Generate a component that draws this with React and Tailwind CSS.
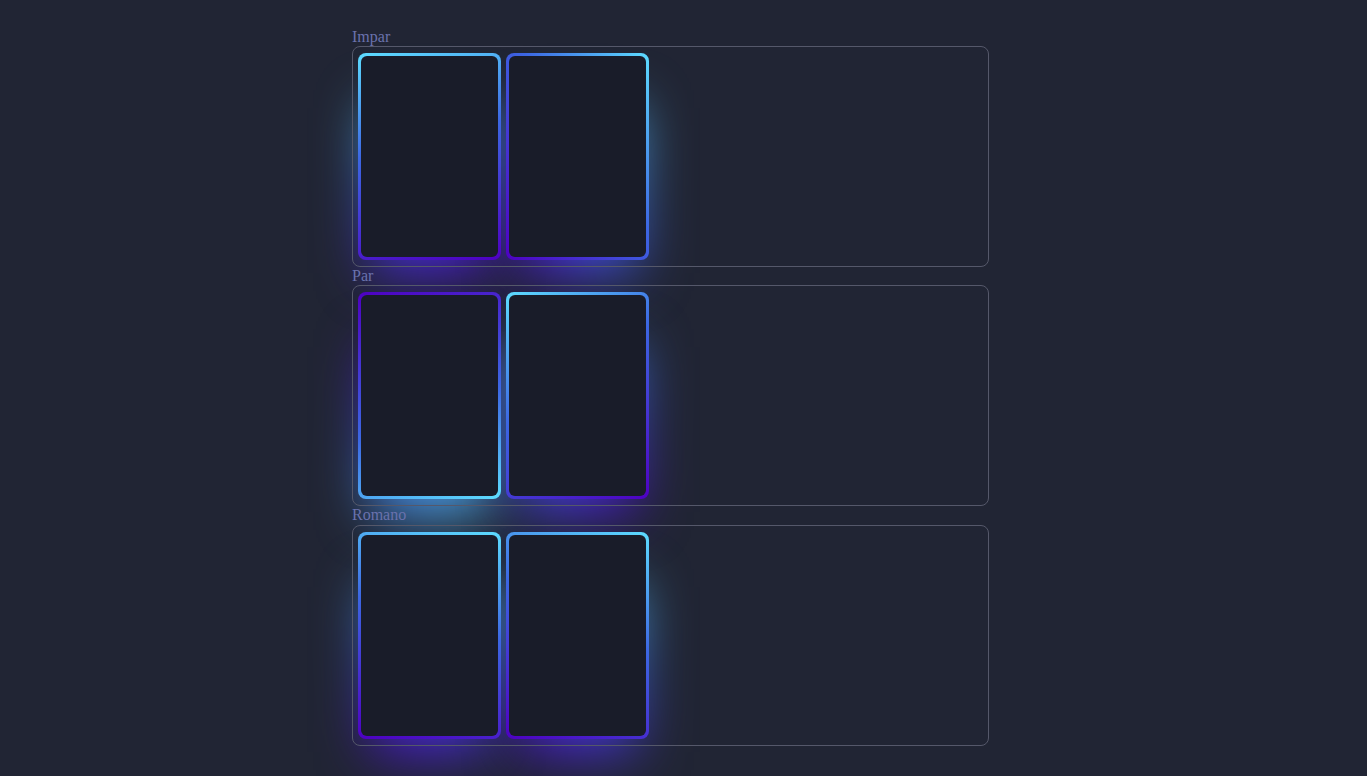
import React from "react";

function Card({ grad }) {
  return (
    <div className="relative w-[143px] h-[207px] shrink-0">
      <div className={`absolute left-0 right-0 top-[34px] h-full -z-10 scale-[0.8] blur-[34px] ${grad}`} />
      <div className={`relative w-full h-full rounded-[8px] p-[3px] ${grad}`}>
        <div className="w-full h-full rounded-[6px] bg-[#191c29]" />
      </div>
    </div>
  );
}

function Section({ label, grads }) {
  return (
    <div className="flex flex-col">
      <div className="text-[16px] leading-[18.4px] text-[#6a72ad]" style={{ fontFamily: '"Liberation Serif", serif' }}>
        {label}
      </div>
      <div className="w-[637px] h-[221px] rounded-[8px] border border-[#55586a] px-[5px] pt-[6px] flex gap-[5px]">
        {grads.map((g, i) => (
          <Card key={i} grad={g} />
        ))}
      </div>
    </div>
  );
}

export default function App() {
  return (
    <div className="isolate relative min-h-screen bg-[#212534] pl-[352px] pt-[27.6px] overflow-hidden">
      <Section
        label="Impar"
        grads={[
          "bg-[linear-gradient(165deg,#5ddcff,#3c67e3_43%,#4e00c2)]",
          "bg-[linear-gradient(235deg,#5ddcff,#3c67e3_43%,#4e00c2)]",
        ]}
      />
      <Section
        label="Par"
        grads={[
          "bg-[linear-gradient(340deg,#5ddcff,#3c67e3_43%,#4e00c2)]",
          "bg-[linear-gradient(145deg,#5ddcff,#3c67e3_43%,#4e00c2)]",
        ]}
      />
      <Section
        label="Romano"
        grads={[
          "bg-[linear-gradient(197deg,#5ddcff,#3c67e3_43%,#4e00c2)]",
          "bg-[linear-gradient(207deg,#5ddcff,#3c67e3_43%,#4e00c2)]",
        ]}
      />
    </div>
  );
}
